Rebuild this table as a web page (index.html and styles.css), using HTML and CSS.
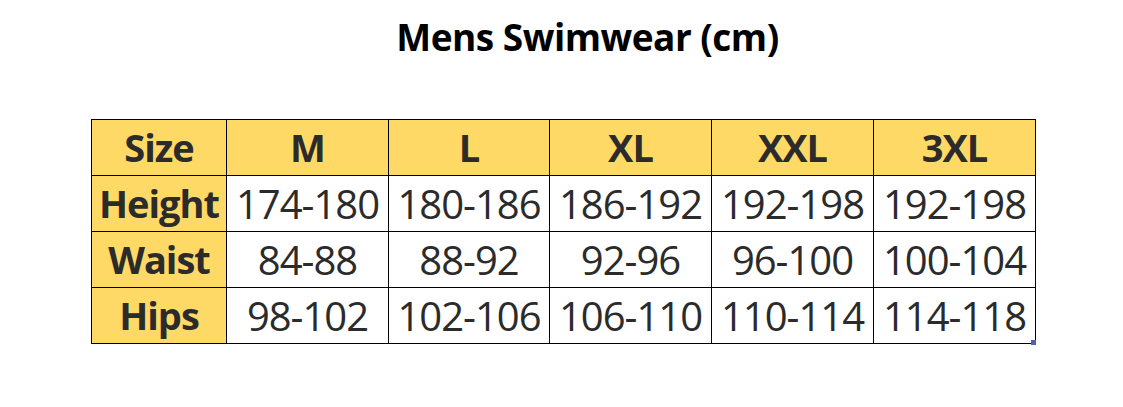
FILE: index.html
```html
<!DOCTYPE html>
<html>
<head>
<meta charset="utf-8">
<link rel="stylesheet" href="styles.css">
</head>
<body>
<div class="page">
  <h1 class="title">Mens Swimwear (cm)</h1>
  <div class="table-wrap">
    <table class="chart">
      <colgroup>
        <col class="c0"><col class="c1"><col class="c2"><col class="c3"><col class="c4"><col class="c5">
      </colgroup>
      <tr class="head">
        <th>Size</th><th>M</th><th>L</th><th>XL</th><th>XXL</th><th>3XL</th>
      </tr>
      <tr>
        <th>Height</th><td>174-180</td><td>180-186</td><td>186-192</td><td>192-198</td><td>192-198</td>
      </tr>
      <tr>
        <th>Waist</th><td>84-88</td><td>88-92</td><td>92-96</td><td>96-100</td><td>100-104</td>
      </tr>
      <tr>
        <th>Hips</th><td>98-102</td><td>102-106</td><td>106-110</td><td>110-114</td><td>114-118</td>
      </tr>
    </table>
    <span class="handle"></span>
  </div>
</div>
</body>
</html>
```
FILE: styles.css
```css
html, body {
  margin: 0;
  padding: 0;
  background: #ffffff;
}
.page {
  width: 1123px;
  height: 407px;
  font-family: "Open Sans", "Liberation Sans", sans-serif;
  display: flex;
  flex-direction: column;
  align-items: center;
}
.title {
  margin: 12px 0 0 0;
  font-size: 37px;
  line-height: 50px;
  font-weight: 700;
  color: #000;
  letter-spacing: -0.5px;
  padding-left: 52px;
}
.table-wrap {
  position: relative;
  margin: 57px 0 0 91px;
  align-self: flex-start;
}
.chart {
  border-collapse: collapse;
  table-layout: fixed;
  width: 945px;
  color: #2b2b2b;
}
.c0 { width: 135px; }
.c1 { width: 162px; }
.c2 { width: 161px; }
.c3 { width: 162px; }
.c4 { width: 162px; }
.c5 { width: 162px; }
.chart th, .chart td {
  border: 1px solid #000;
  height: 55px;
  padding: 0;
  text-align: center;
  font-size: 40px;
  line-height: 55px;
  white-space: nowrap;
  letter-spacing: -1px;
}
.chart th {
  background: #ffd966;
  font-weight: 700;
  font-size: 38px;
}
.chart td {
  background: #ffffff;
  font-weight: 400;
}
.handle {
  position: absolute;
  right: 0;
  bottom: -1px;
  width: 5px;
  height: 5px;
  background: #4a62b0;
}
```
